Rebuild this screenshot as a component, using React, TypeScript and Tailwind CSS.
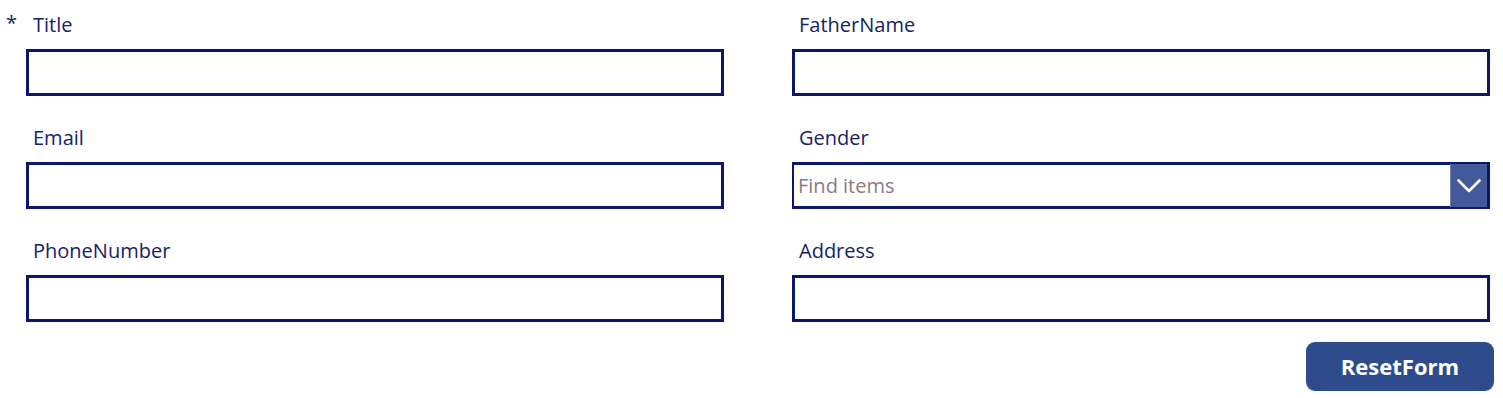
const font = { fontFamily: '"Open Sans", "Liberation Sans", sans-serif' };

function Field({ label, required, children }: { label: string; required?: boolean; children?: React.ReactNode }) {
  return (
    <div className="flex flex-col">
      <div className="relative h-[49px] pt-[12px] pl-[7px] text-[20px] leading-[26px] text-[#15236b]">
        {required && <span className="absolute left-[-20px] top-[10px] text-[#15236b]">*</span>}
        {label}
      </div>
      {children ?? <div className="h-[47px] border-[3px] border-[#0b176b] bg-white" />}
    </div>
  );
}

export default function App() {
  return (
    <div className="w-[1503px] h-[398px] bg-white overflow-hidden" style={font}>
      <div className="grid grid-cols-[698px_698px] gap-x-[68px] gap-y-[17px] pl-[26px]">
        <Field label="Title" required />
        <Field label="FatherName" />
        <Field label="Email" />
        <Field label="Gender">
          <div className="h-[47px] flex items-stretch border-[3px] border-l-2 border-[#0b176b] bg-white">
            <div className="flex-1 flex items-center pl-[4px] text-[20px] text-[#8a7b80]">Find items</div>
            <div className="w-[37px] my-[-1px] flex items-center justify-center bg-[#44599c] border-l border-[#6f80b5]">
              <svg width="24" height="14" viewBox="0 0 24 14" fill="none">
                <polyline points="1.5,1.5 12,12 22.5,1.5" stroke="white" strokeWidth="2.6" strokeLinecap="round" strokeLinejoin="round" />
              </svg>
            </div>
          </div>
        </Field>
        <Field label="PhoneNumber" />
        <Field label="Address" />
      </div>
      <div className="flex justify-end pr-[9px] mt-[20px]">
        <button className="w-[188px] h-[49px] rounded-[9px] bg-[#2e4b8b] text-white text-[22px] font-bold">
          ResetForm
        </button>
      </div>
    </div>
  );
}
